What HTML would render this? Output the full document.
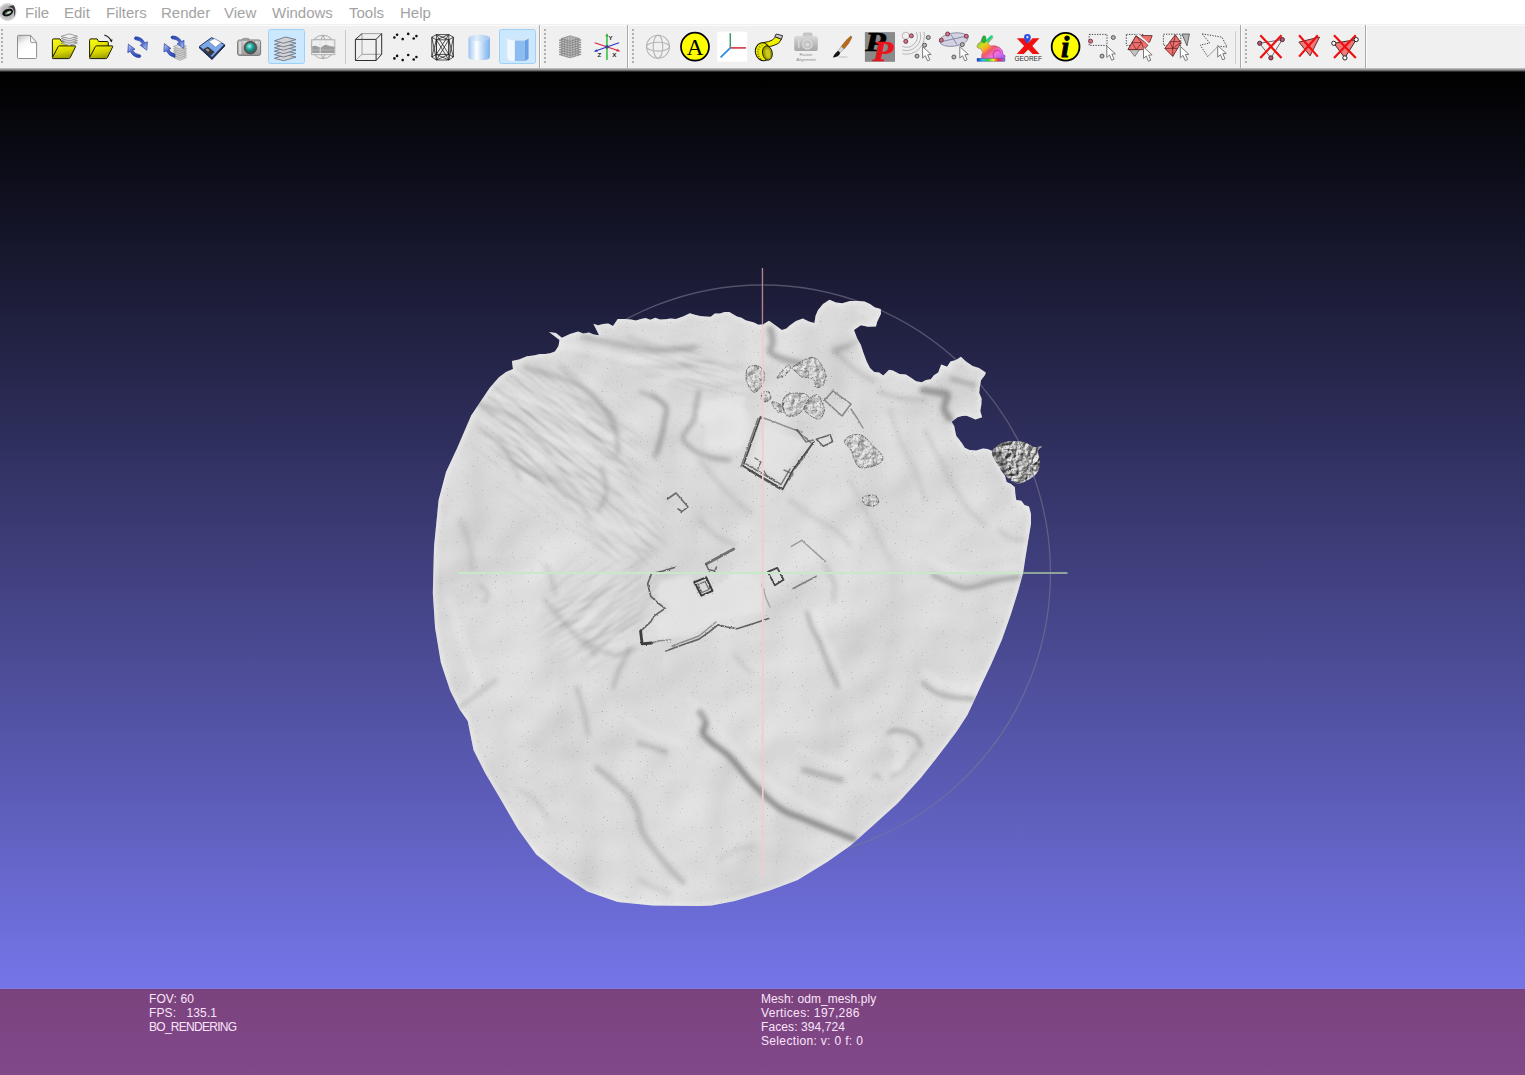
<!DOCTYPE html>
<html>
<head>
<meta charset="utf-8">
<title>MeshLab</title>
<style>
html,body{margin:0;padding:0;}
body{width:1525px;height:1075px;overflow:hidden;position:relative;background:#000;font-family:"Liberation Sans",sans-serif;}
#menubar{position:absolute;left:0;top:0;width:1525px;height:24px;background:#fff;border-bottom:1px solid #f0f0f0;}
#menubar span{position:absolute;top:4px;line-height:17px;font-size:15px;color:#a3a3a3;letter-spacing:0px;white-space:nowrap;}
#toolbar{position:absolute;left:0;top:25px;width:1525px;height:43px;background:#f0f0f0;}
#tbshadow{position:absolute;left:0;top:68px;width:1525px;height:4px;background:linear-gradient(#c6c6c6,#a6a6a6 30%,#747474 58%,#343434 84%,#0a0a0a);}
#viewport{position:absolute;left:0;top:72px;width:1525px;height:1003px;background:linear-gradient(#000000,#8080ff);}
#info{position:absolute;left:0;top:989px;width:1525px;height:86px;background:linear-gradient(#6f3f86 0,#7a437d 2px,#81488a 86px);}
#infotop{position:absolute;left:0;top:988px;width:1525px;height:1px;background:#8478da;}
#info div{position:absolute;font-size:12px;line-height:14px;color:#fbe4fb;white-space:pre;}
#scene{position:absolute;left:0;top:0;width:1525px;height:1075px;}
#icons{position:absolute;left:0;top:0;width:1525px;height:75px;}
</style>
</head>
<body>
<div id="viewport"></div>
<svg id="scene" width="1525" height="1075" viewBox="0 0 1525 1075">
<defs>
<clipPath id="meshclip"><path d="M473.5,750.0 L470.5,735.0 L467.7,721.0 L459.5,709.3 L450.2,690.7 L440.9,662.8 L435.1,627.9 L432.8,593.0 L434.0,546.5 L438.6,500.0 L446.0,472.0 L457.2,448.0 L471.2,415.6 L489.8,387.7 L499.0,377.2 L506.0,372.0 L513.0,369.0 L511.9,361.0 L519.0,359.5 L527.0,356.3 L533.6,355.5 L540.0,354.0 L545.1,354.0 L550.1,353.3 L554.9,351.6 L558.5,346.0 L559.5,340.0 L553.0,335.0 L549.0,331.9 L556.0,333.0 L561.9,337.7 L570.0,334.0 L578.1,331.4 L583.4,333.4 L589.0,332.5 L593.8,334.6 L599.0,335.3 L596.0,329.0 L593.3,323.7 L598.1,325.2 L603.0,324.0 L608.3,323.5 L613.0,326.0 L617.7,319.0 L624.4,319.1 L631.0,319.5 L636.0,320.4 L640.8,318.9 L645.6,317.9 L650.3,319.7 L655.3,317.7 L660.0,319.5 L665.3,319.2 L670.5,318.4 L675.8,319.0 L683.0,316.5 L689.8,313.3 L694.9,314.8 L700.0,316.0 L705.3,316.6 L710.7,316.7 L714.8,313.6 L720.0,313.5 L724.5,311.9 L729.3,312.0 L737.0,316.5 L741.6,317.7 L745.6,320.2 L754.0,322.5 L758.4,324.7 L763.3,324.2 L769.0,320.7 L775.0,325.0 L781.9,330.0 L786.4,328.4 L790.0,325.3 L796.0,321.0 L802.8,318.4 L809.0,321.5 L814.4,323.0 L815.5,316.0 L817.9,310.2 L823.0,304.0 L829.5,299.8 L836.0,302.5 L842.3,303.3 L850.0,301.0 L858.6,300.9 L864.6,301.4 L870.0,304.0 L874.9,307.4 L880.7,309.0 L881.0,313.7 L879.0,318.0 L877.1,322.1 L876.0,326.5 L868.0,326.8 L860.9,325.3 L854.0,330.0 L857.0,338.0 L860.9,345.1 L863.5,353.0 L866.7,361.4 L870.0,368.0 L874.2,371.9 L879.2,372.6 L883.2,375.6 L889.1,369.7 L892.8,370.4 L899.5,374.1 L905.9,374.5 L911.4,377.9 L916.1,381.2 L921.8,382.3 L926.0,379.9 L930.8,379.3 L933.9,375.3 L938.2,372.6 L941.2,364.5 L947.1,366.7 L950.5,361.4 L956.0,360.0 L960.9,356.7 L966.0,361.5 L972.6,366.0 L979.0,368.0 L985.8,372.6 L985.0,374.9 L981.0,380.2 L979.9,386.8 L979.2,392.8 L981.6,398.6 L981.4,404.6 L980.3,411.0 L982.1,417.3 L975.4,419.5 L971.0,417.5 L966.5,415.8 L962.0,416.0 L957.6,417.3 L951.6,421.8 L954.3,426.3 L955.3,431.4 L956.3,436.1 L959.2,439.6 L962.0,443.3 L964.8,447.8 L969.5,450.0 L976.3,450.5 L982.9,448.5 L987.5,449.0 L991.8,450.8 L994.4,455.4 L997.2,460.0 L999.5,464.8 L1000.7,470.1 L1004.9,475.4 L1006.7,482.0 L1011.1,484.1 L1014.9,487.2 L1015.3,493.6 L1016.3,499.9 L1021.3,500.7 L1024.5,504.9 L1029.0,506.6 L1031.0,514.0 L1031.0,523.8 L1028.1,541.3 L1025.2,558.9 L1023.2,572.6 L1018.4,590.2 L1010.5,615.5 L1001.8,640.0 L991.2,664.2 L983.7,680.0 L974.9,699.0 L967.4,714.9 L957.0,731.0 L946.5,745.1 L935.0,760.0 L920.9,777.7 L897.7,803.3 L874.4,824.2 L851.2,845.1 L827.9,861.4 L797.7,880.0 L769.8,890.5 L734.9,900.9 L711.6,905.6 L699.1,906.0 L652.6,905.6 L617.7,902.1 L587.4,891.6 L559.5,873.0 L536.3,854.4 L517.7,828.8 L500.2,798.6 L485.1,773.0 Z"/></clipPath>
<filter id="terrain" x="0" y="0" width="100%" height="100%" color-interpolation-filters="sRGB">
<feTurbulence type="fractalNoise" baseFrequency="0.009" numOctaves="3" seed="11" result="n"/>
<feDiffuseLighting in="n" surfaceScale="9" diffuseConstant="1.0" lighting-color="#ffffff" result="l"><feDistantLight azimuth="225" elevation="58"/></feDiffuseLighting>
<feColorMatrix in="l" type="matrix" values="0.34 0 0 0 0.568  0 0.34 0 0 0.568  0 0 0.34 0 0.568  0 0 0 0 1" result="base"/>
<feTurbulence type="fractalNoise" baseFrequency="0.8" numOctaves="2" seed="3" result="g"/>
<feColorMatrix in="g" type="matrix" values="0 0 0 0 0.3  0 0 0 0 0.3  0 0 0 0 0.3  -2.4 0 0 0 0.66" result="ga"/>
<feComposite in="ga" in2="base" operator="over"/>
</filter>
<filter id="b2" x="-20%" y="-20%" width="140%" height="140%"><feGaussianBlur stdDeviation="2"/></filter>
<filter id="b1" x="-20%" y="-20%" width="140%" height="140%"><feGaussianBlur stdDeviation="0.45"/></filter>
<filter id="speck" x="-10%" y="-10%" width="120%" height="120%" color-interpolation-filters="sRGB">
<feTurbulence type="fractalNoise" baseFrequency="0.6" numOctaves="2" seed="5" result="t"/>
<feColorMatrix in="t" type="matrix" values="0 0 0 0 0.2  0 0 0 0 0.2  0 0 0 0 0.2  -6 0 0 0 2.6" result="tt"/>
<feComposite in="tt" in2="SourceGraphic" operator="in"/>
</filter>
<filter id="crumple" x="-10%" y="-10%" width="120%" height="120%" color-interpolation-filters="sRGB">
<feTurbulence type="fractalNoise" baseFrequency="0.16" numOctaves="3" seed="9" result="t"/>
<feDiffuseLighting in="t" surfaceScale="3.2" diffuseConstant="1" lighting-color="#fff" result="l"><feDistantLight azimuth="225" elevation="50"/></feDiffuseLighting>
<feColorMatrix in="l" type="matrix" values="0.5 0 0 0 0.43  0 0.5 0 0 0.43  0 0 0.5 0 0.43  0 0 0 0 1" result="lc"/>
<feComposite in="lc" in2="SourceGraphic" operator="in"/>
</filter>
<filter id="crumple2" x="-10%" y="-10%" width="120%" height="120%" color-interpolation-filters="sRGB">
<feTurbulence type="fractalNoise" baseFrequency="0.2" numOctaves="3" seed="21" result="t"/>
<feDiffuseLighting in="t" surfaceScale="4.5" diffuseConstant="1" lighting-color="#fff" result="l"><feDistantLight azimuth="225" elevation="48"/></feDiffuseLighting>
<feColorMatrix in="l" type="matrix" values="0.75 0 0 0 0.18  0 0.75 0 0 0.18  0 0 0.75 0 0.18  0 0 0 0 1" result="lc"/>
<feComposite in="lc" in2="SourceGraphic" operator="in"/>
</filter>
<filter id="bumpy" x="-30%" y="-30%" width="160%" height="160%" color-interpolation-filters="sRGB">
<feTurbulence type="fractalNoise" baseFrequency="0.014 0.05" numOctaves="3" seed="17" result="t"/>
<feDiffuseLighting in="t" surfaceScale="5" diffuseConstant="1" lighting-color="#fff" result="l"><feDistantLight azimuth="225" elevation="56"/></feDiffuseLighting>
<feColorMatrix in="l" type="matrix" values="0.62 0 0 0 0.32  0 0.62 0 0 0.32  0 0 0.62 0 0.32  0 0 0 0 1" result="lc"/>
<feGaussianBlur in="SourceAlpha" stdDeviation="14" result="m"/>
<feComposite in="lc" in2="m" operator="in"/>
</filter>
<filter id="rough" x="-5%" y="-5%" width="110%" height="110%">
<feTurbulence type="fractalNoise" baseFrequency="0.35" numOctaves="2" seed="4" result="t"/>
<feDisplacementMap in="SourceGraphic" in2="t" scale="2.2" xChannelSelector="R" yChannelSelector="G" result="d"/>
<feGaussianBlur in="d" stdDeviation="0.35"/>
</filter>
</defs>
<circle cx="762.5" cy="573" r="288" fill="none" stroke="#7a7a90" stroke-opacity="0.58" stroke-width="1.3"/>
<g clip-path="url(#meshclip)">
<rect x="420" y="290" width="640" height="630" fill="#dcdcdc" filter="url(#terrain)"/>
<g filter="url(#bumpy)" opacity="0.6" transform="rotate(-30 595 615)"><ellipse cx="595" cy="615" rx="48" ry="42"/></g>
<g filter="url(#bumpy)" opacity="0.6" transform="rotate(38 560 440)"><ellipse cx="560" cy="440" rx="85" ry="60"/></g>
<g filter="url(#bumpy)" opacity="0.5" transform="rotate(40 620 520)"><ellipse cx="620" cy="520" rx="50" ry="30"/></g>
<g filter="url(#bumpy)" opacity="0.5" transform="rotate(15 690 370)"><ellipse cx="690" cy="370" rx="60" ry="22"/></g>
<g filter="url(#bumpy)" opacity="0.4" transform="rotate(-30 640 590)"><ellipse cx="640" cy="590" rx="30" ry="25"/></g>
<path d="M473.5,750.0 L470.5,735.0 L467.7,721.0 L459.5,709.3 L450.2,690.7 L440.9,662.8 L435.1,627.9 L432.8,593.0 L434.0,546.5 L438.6,500.0 L446.0,472.0 L457.2,448.0 L471.2,415.6 L489.8,387.7 L499.0,377.2 L506.0,372.0 L513.0,369.0 L511.9,361.0 L519.0,359.5 L527.0,356.3 L533.6,355.5 L540.0,354.0 L545.1,354.0 L550.1,353.3 L554.9,351.6 L558.5,346.0 L559.5,340.0 L553.0,335.0 L549.0,331.9 L556.0,333.0 L561.9,337.7 L570.0,334.0 L578.1,331.4 L583.4,333.4 L589.0,332.5 L593.8,334.6 L599.0,335.3 L596.0,329.0 L593.3,323.7 L598.1,325.2 L603.0,324.0 L608.3,323.5 L613.0,326.0 L617.7,319.0 L624.4,319.1 L631.0,319.5 L636.0,320.4 L640.8,318.9 L645.6,317.9 L650.3,319.7 L655.3,317.7 L660.0,319.5 L665.3,319.2 L670.5,318.4 L675.8,319.0 L683.0,316.5 L689.8,313.3 L694.9,314.8 L700.0,316.0 L705.3,316.6 L710.7,316.7 L714.8,313.6 L720.0,313.5 L724.5,311.9 L729.3,312.0 L737.0,316.5 L741.6,317.7 L745.6,320.2 L754.0,322.5 L758.4,324.7 L763.3,324.2 L769.0,320.7 L775.0,325.0 L781.9,330.0 L786.4,328.4 L790.0,325.3 L796.0,321.0 L802.8,318.4 L809.0,321.5 L814.4,323.0 L815.5,316.0 L817.9,310.2 L823.0,304.0 L829.5,299.8 L836.0,302.5 L842.3,303.3 L850.0,301.0 L858.6,300.9 L864.6,301.4 L870.0,304.0 L874.9,307.4 L880.7,309.0 L881.0,313.7 L879.0,318.0 L877.1,322.1 L876.0,326.5 L868.0,326.8 L860.9,325.3 L854.0,330.0 L857.0,338.0 L860.9,345.1 L863.5,353.0 L866.7,361.4 L870.0,368.0 L874.2,371.9 L879.2,372.6 L883.2,375.6 L889.1,369.7 L892.8,370.4 L899.5,374.1 L905.9,374.5 L911.4,377.9 L916.1,381.2 L921.8,382.3 L926.0,379.9 L930.8,379.3 L933.9,375.3 L938.2,372.6 L941.2,364.5 L947.1,366.7 L950.5,361.4 L956.0,360.0 L960.9,356.7 L966.0,361.5 L972.6,366.0 L979.0,368.0 L985.8,372.6 L985.0,374.9 L981.0,380.2 L979.9,386.8 L979.2,392.8 L981.6,398.6 L981.4,404.6 L980.3,411.0 L982.1,417.3 L975.4,419.5 L971.0,417.5 L966.5,415.8 L962.0,416.0 L957.6,417.3 L951.6,421.8 L954.3,426.3 L955.3,431.4 L956.3,436.1 L959.2,439.6 L962.0,443.3 L964.8,447.8 L969.5,450.0 L976.3,450.5 L982.9,448.5 L987.5,449.0 L991.8,450.8 L994.4,455.4 L997.2,460.0 L999.5,464.8 L1000.7,470.1 L1004.9,475.4 L1006.7,482.0 L1011.1,484.1 L1014.9,487.2 L1015.3,493.6 L1016.3,499.9 L1021.3,500.7 L1024.5,504.9 L1029.0,506.6 L1031.0,514.0 L1031.0,523.8 L1028.1,541.3 L1025.2,558.9 L1023.2,572.6 L1018.4,590.2 L1010.5,615.5 L1001.8,640.0 L991.2,664.2 L983.7,680.0 L974.9,699.0 L967.4,714.9 L957.0,731.0 L946.5,745.1 L935.0,760.0 L920.9,777.7 L897.7,803.3 L874.4,824.2 L851.2,845.1 L827.9,861.4 L797.7,880.0 L769.8,890.5 L734.9,900.9 L711.6,905.6 L699.1,906.0 L652.6,905.6 L617.7,902.1 L587.4,891.6 L559.5,873.0 L536.3,854.4 L517.7,828.8 L500.2,798.6 L485.1,773.0 Z" fill="none" stroke="#f6f6f6" stroke-width="7" opacity="0.4" filter="url(#b2)"/>
<g filter="url(#b2)" fill="none" stroke="#6e6e6e" stroke-linecap="round" stroke-linejoin="round">
<path d="M700.0,712.0 C701.0,713.7 705.5,718.5 706.0,722.0 C706.5,725.5 702.0,729.5 703.0,733.0 C704.0,736.5 707.5,739.0 712.0,743.0 C716.5,747.0 723.2,750.2 730.0,757.0 C736.8,763.8 744.5,775.3 753.0,784.0 C761.5,792.7 772.5,803.2 781.0,809.0 C789.5,814.8 795.7,815.5 804.0,819.0 C812.3,822.5 822.7,826.7 831.0,830.0 C839.3,833.3 850.2,837.5 854.0,839.0" stroke-width="6" opacity="0.7"/>
<path d="M804.0,770.0 C807.0,770.8 815.8,773.3 822.0,775.0 C828.2,776.7 837.8,779.2 841.0,780.0" stroke-width="6" opacity="0.38"/>
<path d="M639.0,743.0 C641.2,743.7 647.5,745.5 652.0,747.0 C656.5,748.5 663.7,751.2 666.0,752.0" stroke-width="5" opacity="0.3"/>
<path d="M923.0,683.0 C925.0,684.5 930.3,689.7 935.0,692.0 C939.7,694.3 944.5,695.8 951.0,697.0 C957.5,698.2 970.2,698.7 974.0,699.0" stroke-width="4" opacity="0.45"/>
<path d="M933.0,575.0 C935.5,576.2 943.0,579.9 948.0,582.0 C953.0,584.1 958.5,586.8 963.0,587.5 C967.5,588.2 969.5,587.7 975.0,586.5 C980.5,585.3 988.7,582.1 996.0,580.5 C1003.3,578.9 1015.2,577.6 1019.0,577.0" stroke-width="4.5" opacity="0.5"/>
<path d="M807.0,613.0 C807.8,615.5 810.0,623.3 812.0,628.0 C814.0,632.7 816.3,635.0 819.0,641.0 C821.7,647.0 824.8,656.3 828.0,664.0 C831.2,671.7 836.3,683.2 838.0,687.0" stroke-width="3" opacity="0.5"/>
<path d="M577.0,688.0 C578.2,692.0 582.2,704.3 584.0,712.0 C585.8,719.7 587.3,730.3 588.0,734.0" stroke-width="5" opacity="0.25"/>
<path d="M630.0,649.0 C628.3,652.2 622.8,661.5 620.0,668.0 C617.2,674.5 614.2,684.7 613.0,688.0" stroke-width="3" opacity="0.4"/>
<path d="M597.0,768.0 C599.5,770.0 606.7,775.3 612.0,780.0 C617.3,784.7 624.7,790.7 629.0,796.0 C633.3,801.3 636.0,806.5 638.0,812.0 C640.0,817.5 639.0,823.7 641.0,829.0 C643.0,834.3 646.8,839.3 650.0,844.0 C653.2,848.7 656.3,852.5 660.0,857.0 C663.7,861.5 668.2,866.8 672.0,871.0 C675.8,875.2 681.2,880.2 683.0,882.0" stroke-width="6" opacity="0.3"/>
<path d="M699.0,392.0 C698.5,394.3 696.8,401.3 696.0,406.0 C695.2,410.7 695.7,415.8 694.0,420.0 C692.3,424.2 687.8,427.8 686.0,431.0 C684.2,434.2 682.3,436.3 683.0,439.0 C683.7,441.7 687.3,444.7 690.0,447.0 C692.7,449.3 695.0,451.2 699.0,453.0 C703.0,454.8 709.0,456.8 714.0,458.0 C719.0,459.2 726.5,459.7 729.0,460.0" stroke-width="4.5" opacity="0.42"/>
<path d="M653.0,395.0 C654.5,396.3 659.8,400.3 662.0,403.0 C664.2,405.7 666.3,406.2 666.5,411.0 C666.7,415.8 664.6,425.0 663.0,432.0 C661.4,439.0 658.0,449.5 657.0,453.0" stroke-width="5" opacity="0.28"/>
<path d="M601.0,467.0 C601.7,469.3 604.2,476.3 605.0,481.0 C605.8,485.7 607.0,490.3 606.0,495.0 C605.0,499.7 600.2,506.7 599.0,509.0" stroke-width="4" opacity="0.3"/>
<path d="M560.0,367.0 C563.2,369.8 572.8,378.2 579.0,384.0 C585.2,389.8 592.3,396.8 597.0,402.0 C601.7,407.2 604.3,410.3 607.0,415.0 C609.7,419.7 612.0,427.5 613.0,430.0" stroke-width="5" opacity="0.2"/>
<path d="M478.0,404.0 C479.3,405.0 483.3,408.0 486.0,410.0 C488.7,412.0 492.7,415.0 494.0,416.0" stroke-width="4" opacity="0.25"/>
<path d="M629.0,337.0 C631.8,338.0 640.2,341.2 646.0,343.0 C651.8,344.8 658.2,347.2 664.0,348.0 C669.8,348.8 675.2,348.3 681.0,348.0 C686.8,347.7 696.0,346.3 699.0,346.0" stroke-width="5" opacity="0.15"/>
<path d="M923.0,390.0 C925.0,390.3 931.0,391.3 935.0,392.0 C939.0,392.7 945.2,392.5 947.0,394.0 C948.8,395.5 946.5,398.5 946.0,401.0 C945.5,403.5 943.3,406.0 944.0,409.0 C944.7,412.0 949.0,417.3 950.0,419.0" stroke-width="7" opacity="0.6"/>
<path d="M952.0,379.0 C953.8,379.5 959.3,381.0 963.0,382.0 C966.7,383.0 972.2,384.5 974.0,385.0" stroke-width="5" opacity="0.38"/>
<path d="M770.4,329.0 C770.8,331.3 772.9,339.2 772.8,343.0 C772.7,346.8 768.0,349.2 770.0,352.0 C772.0,354.8 779.4,357.7 784.6,359.6 C789.8,361.5 798.3,362.6 801.0,363.2" stroke-width="6" opacity="0.5"/>
<path d="M833.0,349.0 C834.2,348.8 837.5,347.9 840.0,347.5 C842.5,347.1 846.7,346.8 848.0,346.7" stroke-width="4" opacity="0.25"/>
<path d="M835.0,352.0 C837.2,351.0 844.2,348.0 848.0,346.0 C851.8,344.0 856.3,341.0 858.0,340.0" stroke-width="5" opacity="0.2"/>
<path d="M459.0,708.0 C460.8,706.7 466.5,702.7 470.0,700.0 C473.5,697.3 475.7,695.3 480.0,692.0 C484.3,688.7 493.3,682.0 496.0,680.0" stroke-width="3" opacity="0.3"/>
<path d="M545.0,565.0 C546.2,567.5 550.2,574.8 552.0,580.0 C553.8,585.2 555.3,593.3 556.0,596.0" stroke-width="4" opacity="0.18"/>
<path d="M480.0,585.0 C481.3,586.5 487.3,591.2 488.0,594.0 C488.7,596.8 484.7,600.7 484.0,602.0" stroke-width="4" opacity="0.22"/>
<path d="M735.0,655.0 C736.7,657.2 742.2,665.2 745.0,668.0 C747.8,670.8 750.8,671.3 752.0,672.0" stroke-width="4" opacity="0.15"/>
<path d="M1000.0,530.0 C1001.7,531.3 1006.0,536.3 1010.0,538.0 C1014.0,539.7 1021.7,539.7 1024.0,540.0" stroke-width="5" opacity="0.15"/>
<path d="M700.0,460.0 C702.7,463.3 710.2,473.3 716.0,480.0 C721.8,486.7 729.3,494.7 735.0,500.0 C740.7,505.3 747.5,510.0 750.0,512.0" stroke-width="5" opacity="0.15"/>
<path d="M790.0,500.0 C793.3,502.5 802.5,510.0 810.0,515.0 C817.5,520.0 828.3,525.0 835.0,530.0 C841.7,535.0 847.5,542.5 850.0,545.0" stroke-width="5" opacity="0.14"/>
<path d="M583.0,336.5 C588.7,337.8 605.3,341.7 617.0,344.0 C628.7,346.3 643.3,349.5 653.0,350.5 C662.7,351.5 668.2,350.4 675.0,350.0 C681.8,349.6 690.8,348.3 694.0,348.0" stroke-width="5" opacity="0.3"/>
<path d="M525.0,367.0 C529.7,368.5 543.3,372.5 553.0,376.0 C562.7,379.5 575.2,383.5 583.0,388.0 C590.8,392.5 595.0,397.7 600.0,403.0 C605.0,408.3 610.2,414.3 613.0,420.0 C615.8,425.7 616.2,431.5 617.0,437.0 C617.8,442.5 617.8,450.3 618.0,453.0" stroke-width="5" opacity="0.3"/>
<path d="M478.0,402.0 C481.3,403.3 491.3,407.0 498.0,410.0 C504.7,413.0 511.8,415.7 518.0,420.0 C524.2,424.3 529.7,430.5 535.0,436.0 C540.3,441.5 547.5,450.2 550.0,453.0" stroke-width="5" opacity="0.22"/>
<path d="M641.0,392.0 C643.3,393.0 650.8,395.7 655.0,398.0 C659.2,400.3 665.0,402.3 666.5,406.0 C668.0,409.7 664.8,415.3 664.0,420.0 C663.2,424.7 663.5,427.8 662.0,434.0 C660.5,440.2 656.2,453.2 655.0,457.0" stroke-width="4.5" opacity="0.3"/>
<path d="M500.0,440.0 C502.0,443.7 508.7,455.3 512.0,462.0 C515.3,468.7 518.7,477.0 520.0,480.0" stroke-width="5" opacity="0.16"/>
<path d="M560.0,470.0 C562.5,473.7 570.0,483.7 575.0,492.0 C580.0,500.3 587.5,515.3 590.0,520.0" stroke-width="5" opacity="0.16"/>
<path d="M460.0,520.0 C461.7,524.2 468.0,536.7 470.0,545.0 C472.0,553.3 471.7,565.8 472.0,570.0" stroke-width="5" opacity="0.14"/>
<path d="M545.0,600.0 C547.5,603.0 554.2,611.3 560.0,618.0 C565.8,624.7 574.0,633.8 580.0,640.0 C586.0,646.2 593.3,652.5 596.0,655.0" stroke-width="5" opacity="0.2"/>
<path d="M585.0,640.0 C587.5,641.7 594.5,647.5 600.0,650.0 C605.5,652.5 612.0,655.3 618.0,655.0 C624.0,654.7 633.0,649.2 636.0,648.0" stroke-width="4" opacity="0.25"/>
<path d="M836.0,352.0 C837.7,353.7 842.3,358.7 846.0,362.0 C849.7,365.3 853.7,369.0 858.0,372.0 C862.3,375.0 869.7,378.7 872.0,380.0" stroke-width="5" opacity="0.2"/>
<path d="M880.0,392.0 C883.3,393.0 892.5,396.7 900.0,398.0 C907.5,399.3 920.8,399.7 925.0,400.0" stroke-width="5" opacity="0.2"/>
<path d="M890.0,410.0 C891.7,415.0 895.8,430.0 900.0,440.0 C904.2,450.0 910.8,460.0 915.0,470.0 C919.2,480.0 923.3,495.0 925.0,500.0" stroke-width="4" opacity="0.14"/>
<path d="M925.0,430.0 C928.3,436.7 938.3,457.5 945.0,470.0 C951.7,482.5 958.3,495.8 965.0,505.0 C971.7,514.2 981.7,521.7 985.0,525.0" stroke-width="4" opacity="0.16"/>
<path d="M850.0,480.0 C853.3,486.7 863.3,506.7 870.0,520.0 C876.7,533.3 886.7,553.3 890.0,560.0" stroke-width="4" opacity="0.12"/>
<path d="M700.0,520.0 C702.5,522.5 709.2,530.8 715.0,535.0 C720.8,539.2 731.7,543.3 735.0,545.0" stroke-width="4" opacity="0.2"/>
<path d="M825.0,565.0 C826.7,568.3 833.7,579.2 835.0,585.0 C836.3,590.8 833.3,597.5 833.0,600.0" stroke-width="4" opacity="0.2"/>
<path d="M888.0,733.0 C888.8,732.6 891.3,730.9 893.0,730.5 C894.7,730.1 895.7,730.1 898.0,730.4 C900.3,730.6 904.1,731.1 907.0,732.0 C909.9,732.9 913.5,734.5 915.5,736.0 C917.5,737.5 918.1,739.1 919.0,741.0 C919.9,742.9 920.3,746.2 920.6,747.3" stroke-width="3" opacity="0.55"/>
<path d="M917.0,752.0 C916.1,753.1 913.7,755.6 911.4,758.6 C909.1,761.6 906.6,766.7 903.2,769.8 C899.8,772.9 893.0,775.8 891.0,777.0" stroke-width="2.5" opacity="0.3"/>
<path d="M873.5,778.0 C874.0,777.3 875.4,773.7 876.6,774.0 C877.8,774.3 880.0,779.0 880.7,780.0" stroke-width="2" opacity="0.4"/>
<path d="M640.0,880.0 C642.5,881.3 650.0,885.8 655.0,888.0 C660.0,890.2 667.5,892.2 670.0,893.0" stroke-width="5" opacity="0.15"/>
<path d="M720.0,860.0 C722.5,858.3 729.2,852.3 735.0,850.0 C740.8,847.7 751.7,846.7 755.0,846.0" stroke-width="5" opacity="0.12"/>
<path d="M520.0,790.0 C522.5,791.7 530.3,795.3 535.0,800.0 C539.7,804.7 545.8,815.0 548.0,818.0" stroke-width="5" opacity="0.14"/>
</g>
<g filter="url(#b2)" fill="none" stroke="#f4f4f4" stroke-linecap="round" stroke-linejoin="round">
<path d="M560.0,345.0 C566.7,346.2 586.7,349.5 600.0,352.0 C613.3,354.5 626.7,359.0 640.0,360.0 C653.3,361.0 673.3,358.3 680.0,358.0" stroke-width="8" opacity="0.35"/>
<path d="M500.0,395.0 C505.0,396.7 520.0,400.8 530.0,405.0 C540.0,409.2 550.0,413.3 560.0,420.0 C570.0,426.7 585.0,440.8 590.0,445.0" stroke-width="9" opacity="0.28"/>
<path d="M705.0,415.0 C708.3,414.2 718.8,409.2 725.0,410.0 C731.2,410.8 739.8,415.0 742.0,420.0 C744.2,425.0 742.5,435.8 738.0,440.0 C733.5,444.2 718.8,444.2 715.0,445.0" stroke-width="16" opacity="0.35"/>
<path d="M690.0,700.0 C695.0,705.0 710.0,719.2 720.0,730.0 C730.0,740.8 738.3,754.2 750.0,765.0 C761.7,775.8 776.7,786.7 790.0,795.0 C803.3,803.3 823.3,811.7 830.0,815.0" stroke-width="9" opacity="0.24"/>
<path d="M630.0,720.0 C634.2,722.5 646.7,731.3 655.0,735.0 C663.3,738.7 675.8,740.8 680.0,742.0" stroke-width="8" opacity="0.21"/>
<path d="M800.0,750.0 C804.2,751.7 816.7,757.0 825.0,760.0 C833.3,763.0 845.8,766.7 850.0,768.0" stroke-width="8" opacity="0.24"/>
<path d="M930.0,560.0 C935.0,562.0 950.0,570.3 960.0,572.0 C970.0,573.7 980.8,571.0 990.0,570.0 C999.2,569.0 1010.8,566.7 1015.0,566.0" stroke-width="7" opacity="0.28"/>
<path d="M925.0,672.0 C928.3,674.0 937.8,681.3 945.0,684.0 C952.2,686.7 964.2,687.3 968.0,688.0" stroke-width="7" opacity="0.24"/>
<path d="M815.0,610.0 C816.5,614.2 820.5,626.7 824.0,635.0 C827.5,643.3 832.3,651.7 836.0,660.0 C839.7,668.3 844.3,680.8 846.0,685.0" stroke-width="6" opacity="0.21"/>
<path d="M880.0,330.0 C883.3,332.5 892.5,340.8 900.0,345.0 C907.5,349.2 916.7,351.2 925.0,355.0 C933.3,358.8 945.8,365.8 950.0,368.0" stroke-width="8" opacity="0.21"/>
<path d="M450.0,600.0 C452.0,606.7 457.3,626.7 462.0,640.0 C466.7,653.3 475.3,673.3 478.0,680.0" stroke-width="10" opacity="0.21"/>
<path d="M860.0,310.0 C861.7,310.8 868.0,313.0 870.0,315.0 C872.0,317.0 871.7,320.8 872.0,322.0" stroke-width="8" opacity="0.21"/>
<path d="M896.0,742.0 C897.0,743.7 901.7,748.3 902.0,752.0 C902.3,755.7 898.7,762.0 898.0,764.0" stroke-width="14" opacity="0.28"/>
</g>
<g filter="url(#b2)" fill="#e6e6e6" opacity="0.7">
<path d="M764,425 L750,462 L781,480 L806,442 Z"/>
<path d="M660,580 L690,575 L700,600 L735,570 L760,580 L765,612 L720,620 L690,635 L660,640 L655,620 L672,607 L655,595 Z"/>
<path d="M705,400 L745,395 L740,450 L705,445 Z"/>
</g>
<g filter="url(#crumple)" opacity="0.92">
<path d="M748.0,368.0 C749.7,365.9 753.5,365.2 756.0,365.5 C758.5,365.8 761.7,367.6 763.0,370.0 C764.3,372.4 764.5,377.0 764.0,380.0 C763.5,383.0 761.7,385.9 760.0,388.0 C758.3,390.1 755.8,392.8 754.0,392.5 C752.2,392.2 750.3,388.4 749.0,386.0 C747.7,383.6 746.2,381.0 746.0,378.0 C745.8,375.0 746.3,370.1 748.0,368.0 Z" fill="#000"/>
<path d="M762.0,393.0 C763.0,391.8 766.5,391.2 768.0,392.0 C769.5,392.8 771.3,396.3 771.0,398.0 C770.7,399.7 767.5,401.8 766.0,402.0 C764.5,402.2 762.7,400.5 762.0,399.0 C761.3,397.5 761.0,394.2 762.0,393.0 Z" fill="#000"/>
<path d="M777.0,378.0 C776.7,377.2 781.0,372.2 783.0,370.0 C785.0,367.8 787.8,365.2 789.0,365.0 C790.2,364.8 790.7,367.3 790.0,369.0 C789.3,370.7 787.2,373.5 785.0,375.0 C782.8,376.5 777.3,378.8 777.0,378.0 Z" fill="#000"/>
<path d="M793.0,366.7 C795.8,364.4 807.2,357.5 812.0,357.3 C816.8,357.1 819.8,362.7 822.0,365.6 C824.2,368.5 825.2,371.4 825.4,374.6 C825.6,377.8 824.7,382.5 823.2,384.6 C821.7,386.7 818.2,388.3 816.5,387.4 C814.8,386.5 815.6,380.8 813.2,379.0 C810.8,377.2 805.0,378.1 802.0,376.8 C799.0,375.5 796.8,372.9 795.3,371.2 C793.8,369.5 790.2,369.0 793.0,366.7 Z" fill="#000"/>
<path d="M788.6,394.1 C792.0,393.0 799.8,392.9 803.1,393.5 C806.5,394.1 808.5,395.6 808.7,398.0 C808.9,400.4 806.1,405.3 804.2,408.1 C802.3,410.9 800.3,413.5 797.5,414.8 C794.7,416.1 789.9,417.0 787.5,415.9 C785.1,414.8 783.8,410.7 783.0,408.1 C782.2,405.5 782.1,402.5 783.0,400.2 C783.9,397.9 785.2,395.2 788.6,394.1 Z" fill="#000"/>
<path d="M808.7,399.1 C810.9,396.9 815.4,394.1 817.6,394.7 C819.8,395.3 821.0,399.7 822.1,402.5 C823.2,405.3 824.9,408.6 824.3,411.4 C823.7,414.2 821.5,418.8 818.7,419.2 C815.9,419.6 810.0,415.5 807.6,413.6 C805.2,411.8 804.0,410.5 804.2,408.1 C804.4,405.7 806.5,401.3 808.7,399.1 Z" fill="#000"/>
<path d="M844.4,441.6 C844.4,439.1 848.1,436.4 851.1,435.4 C854.1,434.4 858.8,433.8 862.3,435.4 C865.8,437.0 868.9,441.4 872.3,444.9 C875.6,448.3 881.1,453.1 882.4,456.1 C883.7,459.1 882.4,461.0 880.2,462.8 C878.0,464.6 872.7,466.6 869.0,467.2 C865.3,467.8 860.8,468.9 857.8,466.1 C854.8,463.3 853.3,454.6 851.1,450.5 C848.9,446.4 844.4,444.1 844.4,441.6 Z" fill="#000"/>
<path d="M862.5,499.0 C863.0,497.5 865.8,496.0 868.0,495.5 C870.2,495.0 874.2,494.8 876.0,496.0 C877.8,497.2 879.2,501.3 878.5,503.0 C877.8,504.7 874.2,505.8 872.0,506.0 C869.8,506.2 866.6,505.7 865.0,504.5 C863.4,503.3 862.0,500.5 862.5,499.0 Z" fill="#000"/>
<path d="M772.0,402.0 C772.8,401.2 779.0,403.3 781.0,405.0 C783.0,406.7 784.8,411.2 784.0,412.0 C783.2,412.8 778.0,411.7 776.0,410.0 C774.0,408.3 771.2,402.8 772.0,402.0 Z" fill="#000"/>
</g>
<g filter="url(#rough)">
<path d="M748.0,368.0 C749.7,365.9 753.5,365.2 756.0,365.5 C758.5,365.8 761.7,367.6 763.0,370.0 C764.3,372.4 764.5,377.0 764.0,380.0 C763.5,383.0 761.7,385.9 760.0,388.0 C758.3,390.1 755.8,392.8 754.0,392.5 C752.2,392.2 750.3,388.4 749.0,386.0 C747.7,383.6 746.2,381.0 746.0,378.0 C745.8,375.0 746.3,370.1 748.0,368.0 Z" fill="none" stroke="#4a4a4a" stroke-width="1" stroke-dasharray="3 1.2 1.5 0.8" stroke-opacity="0.7"/>
<path d="M762.0,393.0 C763.0,391.8 766.5,391.2 768.0,392.0 C769.5,392.8 771.3,396.3 771.0,398.0 C770.7,399.7 767.5,401.8 766.0,402.0 C764.5,402.2 762.7,400.5 762.0,399.0 C761.3,397.5 761.0,394.2 762.0,393.0 Z" fill="none" stroke="#4a4a4a" stroke-width="1" stroke-dasharray="3 1.2 1.5 0.8" stroke-opacity="0.7"/>
<path d="M777.0,378.0 C776.7,377.2 781.0,372.2 783.0,370.0 C785.0,367.8 787.8,365.2 789.0,365.0 C790.2,364.8 790.7,367.3 790.0,369.0 C789.3,370.7 787.2,373.5 785.0,375.0 C782.8,376.5 777.3,378.8 777.0,378.0 Z" fill="none" stroke="#4a4a4a" stroke-width="1" stroke-dasharray="3 1.2 1.5 0.8" stroke-opacity="0.7"/>
<path d="M793.0,366.7 C795.8,364.4 807.2,357.5 812.0,357.3 C816.8,357.1 819.8,362.7 822.0,365.6 C824.2,368.5 825.2,371.4 825.4,374.6 C825.6,377.8 824.7,382.5 823.2,384.6 C821.7,386.7 818.2,388.3 816.5,387.4 C814.8,386.5 815.6,380.8 813.2,379.0 C810.8,377.2 805.0,378.1 802.0,376.8 C799.0,375.5 796.8,372.9 795.3,371.2 C793.8,369.5 790.2,369.0 793.0,366.7 Z" fill="none" stroke="#4a4a4a" stroke-width="1" stroke-dasharray="3 1.2 1.5 0.8" stroke-opacity="0.7"/>
<path d="M788.6,394.1 C792.0,393.0 799.8,392.9 803.1,393.5 C806.5,394.1 808.5,395.6 808.7,398.0 C808.9,400.4 806.1,405.3 804.2,408.1 C802.3,410.9 800.3,413.5 797.5,414.8 C794.7,416.1 789.9,417.0 787.5,415.9 C785.1,414.8 783.8,410.7 783.0,408.1 C782.2,405.5 782.1,402.5 783.0,400.2 C783.9,397.9 785.2,395.2 788.6,394.1 Z" fill="none" stroke="#4a4a4a" stroke-width="1" stroke-dasharray="3 1.2 1.5 0.8" stroke-opacity="0.7"/>
<path d="M808.7,399.1 C810.9,396.9 815.4,394.1 817.6,394.7 C819.8,395.3 821.0,399.7 822.1,402.5 C823.2,405.3 824.9,408.6 824.3,411.4 C823.7,414.2 821.5,418.8 818.7,419.2 C815.9,419.6 810.0,415.5 807.6,413.6 C805.2,411.8 804.0,410.5 804.2,408.1 C804.4,405.7 806.5,401.3 808.7,399.1 Z" fill="none" stroke="#4a4a4a" stroke-width="1" stroke-dasharray="3 1.2 1.5 0.8" stroke-opacity="0.7"/>
<path d="M844.4,441.6 C844.4,439.1 848.1,436.4 851.1,435.4 C854.1,434.4 858.8,433.8 862.3,435.4 C865.8,437.0 868.9,441.4 872.3,444.9 C875.6,448.3 881.1,453.1 882.4,456.1 C883.7,459.1 882.4,461.0 880.2,462.8 C878.0,464.6 872.7,466.6 869.0,467.2 C865.3,467.8 860.8,468.9 857.8,466.1 C854.8,463.3 853.3,454.6 851.1,450.5 C848.9,446.4 844.4,444.1 844.4,441.6 Z" fill="none" stroke="#4a4a4a" stroke-width="1" stroke-dasharray="3 1.2 1.5 0.8" stroke-opacity="0.7"/>
<path d="M862.5,499.0 C863.0,497.5 865.8,496.0 868.0,495.5 C870.2,495.0 874.2,494.8 876.0,496.0 C877.8,497.2 879.2,501.3 878.5,503.0 C877.8,504.7 874.2,505.8 872.0,506.0 C869.8,506.2 866.6,505.7 865.0,504.5 C863.4,503.3 862.0,500.5 862.5,499.0 Z" fill="none" stroke="#4a4a4a" stroke-width="1" stroke-dasharray="3 1.2 1.5 0.8" stroke-opacity="0.7"/>
<path d="M772.0,402.0 C772.8,401.2 779.0,403.3 781.0,405.0 C783.0,406.7 784.8,411.2 784.0,412.0 C783.2,412.8 778.0,411.7 776.0,410.0 C774.0,408.3 771.2,402.8 772.0,402.0 Z" fill="none" stroke="#4a4a4a" stroke-width="1" stroke-dasharray="3 1.2 1.5 0.8" stroke-opacity="0.7"/>
</g>
<g filter="url(#speck)" opacity="0.3">
<path d="M748.0,368.0 C749.7,365.9 753.5,365.2 756.0,365.5 C758.5,365.8 761.7,367.6 763.0,370.0 C764.3,372.4 764.5,377.0 764.0,380.0 C763.5,383.0 761.7,385.9 760.0,388.0 C758.3,390.1 755.8,392.8 754.0,392.5 C752.2,392.2 750.3,388.4 749.0,386.0 C747.7,383.6 746.2,381.0 746.0,378.0 C745.8,375.0 746.3,370.1 748.0,368.0 Z" fill="#000"/>
<path d="M762.0,393.0 C763.0,391.8 766.5,391.2 768.0,392.0 C769.5,392.8 771.3,396.3 771.0,398.0 C770.7,399.7 767.5,401.8 766.0,402.0 C764.5,402.2 762.7,400.5 762.0,399.0 C761.3,397.5 761.0,394.2 762.0,393.0 Z" fill="#000"/>
<path d="M777.0,378.0 C776.7,377.2 781.0,372.2 783.0,370.0 C785.0,367.8 787.8,365.2 789.0,365.0 C790.2,364.8 790.7,367.3 790.0,369.0 C789.3,370.7 787.2,373.5 785.0,375.0 C782.8,376.5 777.3,378.8 777.0,378.0 Z" fill="#000"/>
<path d="M793.0,366.7 C795.8,364.4 807.2,357.5 812.0,357.3 C816.8,357.1 819.8,362.7 822.0,365.6 C824.2,368.5 825.2,371.4 825.4,374.6 C825.6,377.8 824.7,382.5 823.2,384.6 C821.7,386.7 818.2,388.3 816.5,387.4 C814.8,386.5 815.6,380.8 813.2,379.0 C810.8,377.2 805.0,378.1 802.0,376.8 C799.0,375.5 796.8,372.9 795.3,371.2 C793.8,369.5 790.2,369.0 793.0,366.7 Z" fill="#000"/>
<path d="M788.6,394.1 C792.0,393.0 799.8,392.9 803.1,393.5 C806.5,394.1 808.5,395.6 808.7,398.0 C808.9,400.4 806.1,405.3 804.2,408.1 C802.3,410.9 800.3,413.5 797.5,414.8 C794.7,416.1 789.9,417.0 787.5,415.9 C785.1,414.8 783.8,410.7 783.0,408.1 C782.2,405.5 782.1,402.5 783.0,400.2 C783.9,397.9 785.2,395.2 788.6,394.1 Z" fill="#000"/>
<path d="M808.7,399.1 C810.9,396.9 815.4,394.1 817.6,394.7 C819.8,395.3 821.0,399.7 822.1,402.5 C823.2,405.3 824.9,408.6 824.3,411.4 C823.7,414.2 821.5,418.8 818.7,419.2 C815.9,419.6 810.0,415.5 807.6,413.6 C805.2,411.8 804.0,410.5 804.2,408.1 C804.4,405.7 806.5,401.3 808.7,399.1 Z" fill="#000"/>
<path d="M844.4,441.6 C844.4,439.1 848.1,436.4 851.1,435.4 C854.1,434.4 858.8,433.8 862.3,435.4 C865.8,437.0 868.9,441.4 872.3,444.9 C875.6,448.3 881.1,453.1 882.4,456.1 C883.7,459.1 882.4,461.0 880.2,462.8 C878.0,464.6 872.7,466.6 869.0,467.2 C865.3,467.8 860.8,468.9 857.8,466.1 C854.8,463.3 853.3,454.6 851.1,450.5 C848.9,446.4 844.4,444.1 844.4,441.6 Z" fill="#000"/>
<path d="M862.5,499.0 C863.0,497.5 865.8,496.0 868.0,495.5 C870.2,495.0 874.2,494.8 876.0,496.0 C877.8,497.2 879.2,501.3 878.5,503.0 C877.8,504.7 874.2,505.8 872.0,506.0 C869.8,506.2 866.6,505.7 865.0,504.5 C863.4,503.3 862.0,500.5 862.5,499.0 Z" fill="#000"/>
<path d="M772.0,402.0 C772.8,401.2 779.0,403.3 781.0,405.0 C783.0,406.7 784.8,411.2 784.0,412.0 C783.2,412.8 778.0,411.7 776.0,410.0 C774.0,408.3 771.2,402.8 772.0,402.0 Z" fill="#000"/>
</g>
<g filter="url(#rough)" fill="none" stroke-linecap="round" stroke-linejoin="round">
<path d="M760.5,417.0 L743.0,466.0 L782.6,489.3 L793.0,470.0 L814.0,441.6" stroke="#4a4a4a" stroke-width="1.75" opacity="1.00"/>
<path d="M746.0,464.0 L781.0,484.5 L790.0,469.0" stroke="#5a5a5a" stroke-width="1.45" opacity="0.80"/>
<path d="M755.0,458.0 L761.0,462.0 L758.0,468.0" stroke="#555" stroke-width="1.45" opacity="0.80"/>
<path d="M784.0,470.0 L793.0,474.0 L789.0,480.0" stroke="#555" stroke-width="1.45" opacity="0.70"/>
<path d="M760.5,417.0 L772.0,421.0 L790.0,428.0 L802.0,432.0" stroke="#666" stroke-width="1.45" opacity="0.65"/>
<path d="M816.3,439.3 L830.2,434.7 L832.6,441.6 L823.3,446.3 Z" stroke="#555" stroke-width="1.55" opacity="0.90"/>
<path d="M797.0,430.0 L806.0,442.0 L813.0,440.0" stroke="#555" stroke-width="1.45" opacity="0.70"/>
<path d="M758.0,418.5 L741.0,466.5" stroke="#555" stroke-width="1.45" opacity="0.75"/>
<path d="M748.0,470.0 L780.5,489.5" stroke="#444" stroke-width="1.45" opacity="0.80"/>
<path d="M764.0,471.0 L767.0,476.0 L775.0,480.5" stroke="#555" stroke-width="1.45" opacity="0.75"/>
<path d="M795.9,429.8 L803.0,436.0 L810.9,442.7" stroke="#555" stroke-width="1.45" opacity="0.70"/>
<path d="M812.0,443.8 L804.0,457.0 L795.3,468.4" stroke="#555" stroke-width="1.45" opacity="0.70"/>
<path d="M824.4,400.0 L833.0,391.0 L851.0,404.0 L842.0,416.0 Z" stroke="#666" stroke-width="1.45" opacity="0.75"/>
<path d="M851.0,409.0 L857.0,418.0 L863.0,428.0" stroke="#666" stroke-width="1.45" opacity="0.65"/>
<path d="M667.5,499.0 L676.0,493.0 L688.0,507.0 L682.0,511.5 L678.0,509.0" stroke="#555" stroke-width="1.55" opacity="0.85"/>
<path d="M675.3,567.2 L663.0,571.0 L651.6,573.5 L647.7,583.8 L650.8,596.4 L658.7,603.5 L665.0,608.3 L654.0,616.2 L650.8,621.7 L640.6,631.2" stroke="#555" stroke-width="1.65" opacity="0.90"/>
<path d="M640.6,631.2 L642.1,643.8 L651.6,643.0" stroke="#3c3c3c" stroke-width="2.85" opacity="1.00"/>
<path d="M651.6,643.0 L659.5,640.7 L670.6,639.9" stroke="#666" stroke-width="1.45" opacity="0.70"/>
<path d="M665.8,651.0 L682.0,645.0 L699.0,639.1 L709.0,632.0 L718.0,624.9 L727.0,627.0 L737.0,628.8 L754.4,623.3 L768.6,618.5" stroke="#555" stroke-width="1.65" opacity="0.90"/>
<path d="M672.0,646.0 L699.0,636.0 L716.0,622.0" stroke="#666" stroke-width="1.35" opacity="0.65"/>
<path d="M706.2,564.0 L733.8,549.0" stroke="#555" stroke-width="2.65" opacity="0.80"/>
<path d="M706.0,564.0 L708.5,569.5 L714.9,571.1 L716.4,567.2" stroke="#555" stroke-width="1.65" opacity="0.85"/>
<path d="M694.3,582.2 L706.2,577.4 L712.5,590.9 L701.4,595.6 Z" stroke="#3c3c3c" stroke-width="2.05" opacity="1.00"/>
<path d="M698.0,584.5 L705.0,581.5 L709.0,589.5 L702.0,592.5 Z" stroke="#555" stroke-width="1.25" opacity="0.80"/>
<path d="M767.8,571.9 L777.3,567.9 L783.6,579.8 L774.9,585.3 Z" stroke="#444" stroke-width="1.75" opacity="1.00"/>
<path d="M793.1,588.5 L816.0,576.6" stroke="#666" stroke-width="1.65" opacity="0.75"/>
<path d="M790.8,546.6 L801.8,540.3 L825.5,561.6" stroke="#777" stroke-width="1.45" opacity="0.65"/>
<path d="M762.0,585.0 L766.0,598.0 L770.0,607.0" stroke="#777" stroke-width="1.45" opacity="0.50"/>
</g>
</g>
<clipPath id="rockclip"><path d="M992.0,452.0 C992.7,449.0 996.7,445.8 1000.0,444.0 C1003.3,442.2 1008.0,441.3 1012.0,441.0 C1016.0,440.7 1020.3,441.0 1024.0,442.0 C1027.7,443.0 1031.0,446.2 1034.0,447.0 C1037.0,447.8 1041.3,445.8 1042.0,446.5 C1042.7,447.2 1038.3,448.4 1038.0,451.0 C1037.7,453.6 1040.2,458.3 1040.0,462.0 C1039.8,465.7 1039.0,470.0 1037.0,473.0 C1035.0,476.0 1031.2,478.2 1028.0,480.0 C1024.8,481.8 1021.3,483.8 1018.0,483.5 C1014.7,483.2 1010.7,480.2 1008.0,478.0 C1005.3,475.8 1004.0,472.7 1002.0,470.0 C1000.0,467.3 997.7,465.0 996.0,462.0 C994.3,459.0 991.3,455.0 992.0,452.0 Z"/></clipPath>
<g>
<g filter="url(#crumple2)"><path d="M992.0,452.0 C992.7,449.0 996.7,445.8 1000.0,444.0 C1003.3,442.2 1008.0,441.3 1012.0,441.0 C1016.0,440.7 1020.3,441.0 1024.0,442.0 C1027.7,443.0 1031.0,446.2 1034.0,447.0 C1037.0,447.8 1041.3,445.8 1042.0,446.5 C1042.7,447.2 1038.3,448.4 1038.0,451.0 C1037.7,453.6 1040.2,458.3 1040.0,462.0 C1039.8,465.7 1039.0,470.0 1037.0,473.0 C1035.0,476.0 1031.2,478.2 1028.0,480.0 C1024.8,481.8 1021.3,483.8 1018.0,483.5 C1014.7,483.2 1010.7,480.2 1008.0,478.0 C1005.3,475.8 1004.0,472.7 1002.0,470.0 C1000.0,467.3 997.7,465.0 996.0,462.0 C994.3,459.0 991.3,455.0 992.0,452.0 Z" fill="#000"/></g>
<g clip-path="url(#rockclip)"><g filter="url(#b2)"><path d="M995,451 L1001,462 L1006,474" stroke="#505050" stroke-width="6" fill="none" opacity="0.6"/><path d="M1020,455 L1028,470 L1020,480" stroke="#8a8a8a" stroke-width="5" fill="none" opacity="0.5"/><path d="M1012,446 L1030,450" stroke="#e8e8e8" stroke-width="5" fill="none" opacity="0.45"/></g></g>
<g filter="url(#speck)" opacity="0.45"><path d="M992.0,452.0 C992.7,449.0 996.7,445.8 1000.0,444.0 C1003.3,442.2 1008.0,441.3 1012.0,441.0 C1016.0,440.7 1020.3,441.0 1024.0,442.0 C1027.7,443.0 1031.0,446.2 1034.0,447.0 C1037.0,447.8 1041.3,445.8 1042.0,446.5 C1042.7,447.2 1038.3,448.4 1038.0,451.0 C1037.7,453.6 1040.2,458.3 1040.0,462.0 C1039.8,465.7 1039.0,470.0 1037.0,473.0 C1035.0,476.0 1031.2,478.2 1028.0,480.0 C1024.8,481.8 1021.3,483.8 1018.0,483.5 C1014.7,483.2 1010.7,480.2 1008.0,478.0 C1005.3,475.8 1004.0,472.7 1002.0,470.0 C1000.0,467.3 997.7,465.0 996.0,462.0 C994.3,459.0 991.3,455.0 992.0,452.0 Z" fill="#000"/></g>
<circle cx="762.5" cy="573" r="288" fill="none" stroke="#8c8c8c" stroke-width="1.2" clip-path="url(#rockclip)"/>
</g>
<line x1="762.4" y1="268" x2="762.4" y2="324.5" stroke="#a29eb0" stroke-width="1.2"/>
<line x1="763.3" y1="269" x2="763.3" y2="324.5" stroke="#7a2436" stroke-width="0.7"/>
<line x1="762.8" y1="324.5" x2="762.8" y2="878" stroke="#f2cbcc" stroke-width="1.6"/>
<line x1="458" y1="573" x2="1023" y2="573" stroke="#c6e9c7" stroke-width="2"/>
<line x1="1023" y1="573" x2="1067.5" y2="573" stroke="#8da39b" stroke-width="2"/>
</svg>
<div id="infotop"></div>
<div id="info">
<div style="left:149px;top:3px"><span style="letter-spacing:0.1px">FOV: 60</span>
<span style="letter-spacing:0.12px">FPS:   135.1</span>
<span style="letter-spacing:-0.72px">BO_RENDERING</span></div>
<div style="left:761px;top:3px"><span style="letter-spacing:0.07px">Mesh: odm_mesh.ply</span>
<span style="letter-spacing:0.35px">Vertices: 197,286</span>
<span style="letter-spacing:0.1px">Faces: 394,724</span>
<span style="letter-spacing:0.34px">Selection: v: 0 f: 0</span></div>
</div>
<div id="menubar">
<span style="left:25px">File</span>
<span style="left:64px">Edit</span>
<span style="left:106px">Filters</span>
<span style="left:161px">Render</span>
<span style="left:224px">View</span>
<span style="left:272px">Windows</span>
<span style="left:349px">Tools</span>
<span style="left:400px">Help</span>
</div>
<div id="toolbar"></div>
<div id="tbshadow"></div>
<svg id="icons" width="1525" height="75" viewBox="0 0 1525 75">
<defs>
<linearGradient id="gFold" x1="0" y1="0" x2="0.6" y2="1"><stop offset="0" stop-color="#ffff20"/><stop offset="0.55" stop-color="#e0e000"/><stop offset="1" stop-color="#8c8c00"/></linearGradient>
<linearGradient id="gFold2" x1="0" y1="0" x2="0.3" y2="1"><stop offset="0" stop-color="#f4f400"/><stop offset="0.6" stop-color="#d0d000"/><stop offset="1" stop-color="#a0a000"/></linearGradient>
<linearGradient id="gDoc" x1="0.2" y1="0" x2="0.5" y2="0.6"><stop offset="0" stop-color="#c8c8c8"/><stop offset="0.5" stop-color="#f6f6f6"/><stop offset="1" stop-color="#ffffff"/></linearGradient>
<linearGradient id="gBlueA" x1="0" y1="0" x2="1" y2="1"><stop offset="0" stop-color="#2040b0"/><stop offset="0.55" stop-color="#4868d0"/><stop offset="1" stop-color="#c8d8f8"/></linearGradient>
<linearGradient id="gBlueB" x1="1" y1="1" x2="0" y2="0"><stop offset="0" stop-color="#2040b0"/><stop offset="0.55" stop-color="#4868d0"/><stop offset="1" stop-color="#c8d8f8"/></linearGradient>
<linearGradient id="gCyl" x1="0" y1="0" x2="1" y2="0"><stop offset="0" stop-color="#9cc4f0"/><stop offset="0.38" stop-color="#ffffff"/><stop offset="0.75" stop-color="#a8ccf4"/><stop offset="1" stop-color="#7eb0ea"/></linearGradient>
<linearGradient id="gCam" x1="0" y1="0" x2="0" y2="1"><stop offset="0" stop-color="#d8d8d8"/><stop offset="0.5" stop-color="#b4b4b4"/><stop offset="1" stop-color="#9a9a9a"/></linearGradient>
<radialGradient id="gLens" cx="0.4" cy="0.35" r="0.7"><stop offset="0" stop-color="#a0f0e8"/><stop offset="0.5" stop-color="#20a8a0"/><stop offset="1" stop-color="#086860"/></radialGradient>
<linearGradient id="gRain" x1="0" y1="0" x2="1" y2="0"><stop offset="0" stop-color="#2030d0"/><stop offset="0.2" stop-color="#20c0e0"/><stop offset="0.4" stop-color="#30d030"/><stop offset="0.58" stop-color="#f0f020"/><stop offset="0.75" stop-color="#f03020"/><stop offset="0.9" stop-color="#d030d0"/><stop offset="1" stop-color="#20c0a0"/></linearGradient>
<linearGradient id="gBun" x1="0" y1="0.1" x2="0.9" y2="1"><stop offset="0" stop-color="#20c040"/><stop offset="0.28" stop-color="#c8e020"/><stop offset="0.42" stop-color="#f8b020"/><stop offset="0.56" stop-color="#f05868"/><stop offset="0.76" stop-color="#f070e0"/><stop offset="1" stop-color="#a860f0"/></linearGradient>
<g id="hdl" fill="#b0b0b0"><rect x="0" y="0" width="2" height="2"/><rect x="0" y="4" width="2" height="2"/><rect x="0" y="8" width="2" height="2"/><rect x="0" y="12" width="2" height="2"/><rect x="0" y="16" width="2" height="2"/><rect x="0" y="20" width="2" height="2"/><rect x="0" y="24" width="2" height="2"/><rect x="0" y="28" width="2" height="2"/><rect x="0" y="32" width="2" height="2"/></g>
<g id="cur"><path d="M0,0 L0,11.5 L2.7,9 L4.9,14.2 L7.3,13.2 L5.1,8.1 L8.6,7.9 Z" fill="#ffffff" stroke="#7a7a7a" stroke-width="1" stroke-linejoin="round"/></g>
<g id="gdot"><circle r="2" fill="#b4b4b4" stroke="#4e4e4e" stroke-width="0.9"/></g>
<g id="rdot"><circle r="2" fill="#d87488" stroke="#6a3040" stroke-width="0.9"/></g>
</defs>
<!-- logo -->
<g>
<defs>
<radialGradient id="gFace" cx="0.5" cy="0.5" r="0.5"><stop offset="0" stop-color="#a6a4a6"/><stop offset="0.6" stop-color="#b8b6b8"/><stop offset="0.86" stop-color="#d6d4d6"/><stop offset="1" stop-color="#ffffff" stop-opacity="0"/></radialGradient>
<filter id="fb" x="-30%" y="-30%" width="160%" height="160%"><feGaussianBlur stdDeviation="0.55"/></filter>
<radialGradient id="gIris" cx="0.6" cy="0.5" r="0.6"><stop offset="0" stop-color="#f6fff6"/><stop offset="0.45" stop-color="#a8c0a8"/><stop offset="1" stop-color="#2c3c2c"/></radialGradient>
</defs>
<circle cx="7.6" cy="12" r="9.8" fill="url(#gFace)"/>
<g filter="url(#fb)">
<path d="M7.6,7.4 Q11,5 13.8,5.2 Q16.6,10 14.2,17.2 Q14.6,11 12.6,8.2 Q10,6.6 7.6,7.4 Z" fill="#1a161a" opacity="0.8"/>
<ellipse cx="7.7" cy="12.5" rx="5.6" ry="3.5" transform="rotate(-22 7.7 12.5)" fill="#0c0c0c"/>
<ellipse cx="8" cy="12.7" rx="3.7" ry="1.7" transform="rotate(-24 8 12.7)" fill="url(#gIris)"/>
<path d="M5.4,13.2 Q7.4,11.6 9.4,11.4" stroke="#2a3a2a" stroke-width="0.5" fill="none"/>
</g>
</g>
<!-- toolbar top highlight -->
<rect x="0" y="25" width="1525" height="1" fill="#fbfbfb"/>
<!-- handles -->
<use href="#hdl" x="1" y="29"/><use href="#hdl" x="544" y="29"/><use href="#hdl" x="632" y="29"/><use href="#hdl" x="1245" y="29"/>
<!-- separators -->
<rect x="345" y="30" width="1" height="34" fill="#c9c9c9"/>
<rect x="539" y="25" width="1" height="43" fill="#a9a9a9"/><rect x="540" y="25" width="1" height="43" fill="#fdfdfd"/>
<rect x="627" y="25" width="1" height="43" fill="#a9a9a9"/><rect x="628" y="25" width="1" height="43" fill="#fdfdfd"/>
<rect x="1235" y="31" width="1" height="33" fill="#cdcdcd"/>
<rect x="1240" y="25" width="1" height="43" fill="#a9a9a9"/><rect x="1241" y="25" width="1" height="43" fill="#fdfdfd"/>
<rect x="1365" y="25" width="1" height="43" fill="#a9a9a9"/><rect x="1366" y="25" width="1" height="43" fill="#fdfdfd"/>
<!-- checked highlights -->
<rect x="268.5" y="29.5" width="36" height="34" rx="2" fill="#cce8ff" stroke="#9fd0f8" stroke-width="1"/>
<rect x="499.5" y="29.5" width="36" height="34" rx="2" fill="#cce8ff" stroke="#9fd0f8" stroke-width="1"/>

<!-- 1 new document -->
<path d="M17.5,36.5 q0,-1.2 1.2,-1.2 H30.5 L36.6,42.6 V57.4 q0,1.1 -1.1,1.1 H18.6 q-1.1,0 -1.1,-1.1 Z" fill="url(#gDoc)" stroke="#8e8e8e" stroke-width="1"/>
<path d="M30.5,35.3 V41 q0,1.6 1.6,1.6 H36.6 Z" fill="#f4f4f4" stroke="#8e8e8e" stroke-width="0.9" stroke-linejoin="round"/>

<!-- 2 folder + layers -->
<g>
<path d="M52.4,57 V40.2 q0,-1.3 1.3,-1.3 h6.2 l1.6,2.6 h8.6 q1,0 1,1 V46" fill="url(#gFold)" stroke="#1a1a00" stroke-width="1"/>
<path d="M52.4,57.6 L58.2,46.6 q0.4,-0.7 1.2,-0.7 H75 q0.9,0 0.5,0.9 L70.2,57.6 q-0.5,1 -1.6,1 H53.2 q-1.2,0 -0.8,-1 Z" fill="url(#gFold2)" stroke="#1a1a00" stroke-width="1" stroke-linejoin="round"/>
<g stroke="#8c8c8c" stroke-width="0.8" fill="#dcdcdc">
<path d="M61,43.2 L69,40.6 L77.5,43 L69.5,45.4 Z"/>
<path d="M61,40.9 L69,38.3 L77.5,40.7 L69.5,43.1 Z"/>
<path d="M61,38.6 L69,36 L77.5,38.4 L69.5,40.8 Z" fill="#e8e8e8"/>
<path d="M61,36.4 L69,33.9 L77.5,36.2 L69.5,38.6 Z" fill="#f2f2f2"/>
</g>
</g>

<!-- 3 folder + arrow -->
<g>
<path d="M89.6,57 V40.2 q0,-1.3 1.3,-1.3 h6.2 l1.6,2.6 h8.6 q1,0 1,1 V46" fill="url(#gFold)" stroke="#1a1a00" stroke-width="1"/>
<path d="M89.6,57.6 L95.4,46.6 q0.4,-0.7 1.2,-0.7 H112.2 q0.9,0 0.5,0.9 L107.4,57.6 q-0.5,1 -1.6,1 H90.4 q-1.2,0 -0.8,-1 Z" fill="url(#gFold2)" stroke="#1a1a00" stroke-width="1" stroke-linejoin="round"/>
<path d="M104.3,35 q5.2,1.6 7,6.2" fill="none" stroke="#222" stroke-width="1.1"/>
<path d="M109.6,40.2 L111.9,42.6 L112.5,39.2 Z" fill="#222"/>
</g>

<!-- 4 reload -->
<g id="reload">
<path d="M135.6,36.8 q6.5,0.2 9.2,6.2 l2.6,-1.2 l-0.6,8.4 l-6.6,-5 l2.4,-1.1 q-2.2,-4.2 -7.6,-4.6 q-1.6,-1.7 0.6,-2.7 Z" fill="url(#gBlueA)" stroke="#2a3c9c" stroke-width="0.7" stroke-linejoin="round"/>
<path d="M139.6,57.6 q-6.5,-0.2 -9.2,-6.2 l-2.6,1.2 l0.6,-8.4 l6.6,5 l-2.4,1.1 q2.2,4.2 7.6,4.6 q1.6,1.7 -0.6,2.7 Z" fill="url(#gBlueB)" stroke="#2a3c9c" stroke-width="0.7" stroke-linejoin="round"/>
</g>
<!-- 5 reload all -->
<g>
<g stroke="#9a9a9a" stroke-width="0.7" fill="#cfcfcf">
<path d="M173.5,57.5 L180,55 L186.5,57.3 L180,60.3 Z"/>
<path d="M173.5,55.3 L180,52.8 L186.5,55.1 L180,58.1 Z"/>
<path d="M173.5,53.1 L180,50.6 L186.5,52.9 L180,55.9 Z"/>
<path d="M173.5,50.9 L180,48.4 L186.5,50.7 L180,53.7 Z"/>
<path d="M173.5,48.7 L180,46.2 L186.5,48.5 L180,51.5 Z"/>
<path d="M173.5,46.5 L180,44 L186.5,46.3 L180,49.3 Z" fill="#dddddd"/>
</g>
<path d="M172,36 q6.8,0 9.6,5.6 l2.4,-1.2 l-0.3,8 l-6.6,-4.6 l2.3,-1.1 q-2.3,-3.8 -7.6,-4 q-1.7,-1.7 0.2,-2.7 Z" fill="url(#gBlueA)" stroke="#2a3c9c" stroke-width="0.7" stroke-linejoin="round"/>
<path d="M175,57.2 q-6,-0.8 -8.6,-6.4 l-2.5,1.1 l0.5,-8.3 l6.5,4.9 l-2.3,1.1 q2.1,3.6 6.4,4.6 Z" fill="url(#gBlueB)" stroke="#2a3c9c" stroke-width="0.7" stroke-linejoin="round"/>
</g>

<!-- 6 save floppy -->
<g stroke-linejoin="round">
<path d="M199,47.6 L211.6,38.2 L225,45.8 L212,59.6 Z" fill="#1c2c58" stroke="#101a3a" stroke-width="0.8"/>
<path d="M199.4,46.4 L211.6,37.6 L224.6,44.6 L212,57.6 Z" fill="#7aa8e8" stroke="#1c2c58" stroke-width="0.9"/>
<path d="M208.6,41.6 L214.4,38.6 L221.6,42.4 L215.6,47.2 Z" fill="#ffffff" stroke="#4a5a8a" stroke-width="0.5"/>
<path d="M203.6,49.4 L207.8,47 L214.2,52 L210.8,55.6 Z" fill="#3a3a3a" stroke="#1a1a2a" stroke-width="0.5"/>
<path d="M205.4,49.6 L207.4,48.5 L209.8,50.4 L208,51.8 Z" fill="#9a9a9a"/>
</g>

<!-- 7 camera -->
<g>
<rect x="242.5" y="38.4" width="6.5" height="3" rx="0.8" fill="#c4c4c4" stroke="#7a7a7a" stroke-width="0.7"/>
<rect x="237.6" y="40" width="23" height="15.4" rx="1.8" fill="url(#gCam)" stroke="#6e6e6e" stroke-width="0.9"/>
<rect x="238.4" y="41" width="3.4" height="13.4" rx="1" fill="#d8d8d8" stroke="#8a8a8a" stroke-width="0.5"/>
<rect x="254.5" y="41.4" width="4.2" height="2.2" fill="#e8e8e8" stroke="#7a7a7a" stroke-width="0.4"/>
<circle cx="250.4" cy="47.6" r="6.3" fill="#5a5a5a" stroke="#3a3a3a" stroke-width="0.7"/>
<circle cx="250.4" cy="47.6" r="4.6" fill="url(#gLens)"/>
</g>

<!-- 8 layers (checked) -->
<g stroke="#66768a" stroke-width="0.9" fill="#d3d1d1" stroke-linejoin="round">
<path d="M274.4,58.3 L285.6,54.5 L296,57.1 L283.6,60.7 Z"/>
<path d="M274.4,54.6 L285.6,50.8 L296,53.4 L283.6,57.0 Z"/>
<path d="M274.4,51.2 L285.6,47.4 L296,50.0 L283.6,53.6 Z"/>
<path d="M274.4,47.8 L285.6,44.0 L296,46.6 L283.6,50.2 Z"/>
<path d="M274.4,44.4 L285.6,40.6 L296,43.2 L283.6,46.8 Z"/>
<path d="M274.4,40.8 L285.6,37.0 L296,39.6 L283.6,43.2 Z"/>
</g>

<!-- 9 globe raster (disabled look) -->
<g fill="none" stroke="#ababab" stroke-width="1">
<circle cx="323" cy="46.9" r="11.7"/>
<path d="M323,35.2 Q316,46.9 323,58.6 M323,35.2 Q330,46.9 323,58.6 M314,39.4 H332 M314,54.6 H332" />
<rect x="311.6" y="39.8" width="23.2" height="14.8" fill="#efefef" fill-opacity="0.8" stroke="#b4b4b4"/>
<path d="M312.2,46.2 q3.4,-1 6.2,0.8 l2.600,0.600 q3.600,-3.800 6.400,-2.400 q3,1.400 7,1.600 V53 H312.200 Z" fill="#9c9c9c" stroke="none"/>
<path d="M312.200,50 H334.400" stroke="#c2c2c2" stroke-width="0.700"/>
<path d="M320.200,39.800 V54.600" stroke="#e4e4e4" stroke-width="0.900"/>
</g>

<!-- 10 bbox wire -->
<g fill="none" stroke-width="1">
<path d="M362,54.3 V33.6 H381.7 M362,54.3 L355.4,60.5 M362,54.3 H381.7" stroke="#8c8c8c" stroke-width="0.8"/>
<path d="M355.4,39.4 H376.1 V60.5 H355.4 Z M355.4,39.4 L362,33.6 M376.1,39.4 L381.7,33.6 V54.3 L376.1,60.5" stroke="#2e2e2e"/>
</g>

<!-- 11 points -->
<g fill="#111">
<circle cx="397.1" cy="34.7" r="1.3"/><circle cx="408.2" cy="33.9" r="1.3"/><circle cx="416.4" cy="36.1" r="1.3"/><circle cx="394.4" cy="37.5" r="1.3"/><circle cx="402.7" cy="39.1" r="1.3"/><circle cx="413.7" cy="38.5" r="1.3"/>
<circle cx="397.1" cy="55.9" r="1.3"/><circle cx="408.2" cy="55" r="1.3"/><circle cx="416.4" cy="57" r="1.3"/><circle cx="394.4" cy="58.4" r="1.3"/><circle cx="402.7" cy="60.1" r="1.3"/><circle cx="413.7" cy="59.5" r="1.3"/>
</g>

<!-- 12 wireframe cylinder -->
<g fill="none" stroke="#1c1c1c" stroke-width="0.75">
<path d="M431.8,37.2 L436.4,34.6 L448.8,34.6 L453.4,37.2 L448.8,39.8 L436.4,39.8 Z"/>
<path d="M431.8,57 L436.4,54.4 L448.8,54.4 L453.4,57 L448.8,60 L436.4,60 Z"/>
<path d="M431.8,37.2 V57 M453.4,37.2 V57 M436.4,39.8 V60 M448.8,39.8 V60 M436.4,34.6 V54.4 M448.8,34.6 V54.4"/>
<path d="M431.8,37.2 L436.4,60 M436.4,39.8 L431.8,57 M436.4,39.8 L448.8,60 M448.8,39.8 L436.4,60 M448.8,39.8 L453.4,57 M453.4,37.2 L448.8,60 M436.4,34.6 L448.8,54.4 M448.8,34.6 L436.4,54.4 M436.4,34.6 L448.8,39.8 M448.8,34.6 L436.4,39.8 M436.4,54.4 L448.8,60 M448.8,54.4 L436.4,60"/>
</g>

<!-- 13 smooth cylinder -->
<g>
<path d="M468.4,38 V57 q0,3.2 10.8,3.2 q10.8,0 10.8,-3.2 V38 Z" fill="url(#gCyl)"/>
<ellipse cx="479.2" cy="38" rx="10.8" ry="3.2" fill="#c4dcf6"/>
<ellipse cx="479.2" cy="38" rx="10.8" ry="3.2" fill="url(#gCyl)" opacity="0.5"/>
</g>

<!-- 14 flat cylinder (checked) -->
<g>
<path d="M507.4,38.6 L511,36.4 H524.6 L528.6,38.4 V59 L524.6,61 H511 L507.4,58.6 Z" fill="#e8f2fc"/>
<path d="M507.4,38.6 L511,36.4 H524.6 L528.6,38.4 L524.6,40.4 H511 Z" fill="#d2e6fa"/>
<path d="M514.6,40.6 H525 V61 H514.6 Z" fill="#8dbcf0"/>
<path d="M525,40.6 L528.6,38.4 V59 L525,61 Z" fill="#6aa0e2"/>
<path d="M507.4,38.6 L511,40.6 H514.6 V61 H511 L507.4,58.6 Z" fill="#f2f7fd"/>
</g>
<!-- 15 layers wire (gray hatched) -->
<g fill="#bdbdbd" stroke="#6c6c6c" stroke-width="0.55">
<path d="M559,54.6 L570,51.6 L581.2,54.4 L570,57.8 Z"/>
<path d="M559,52.2 L570,49.2 L581.2,52 L570,55.4 Z"/>
<path d="M559,49.8 L570,46.8 L581.2,49.6 L570,53 Z"/>
<path d="M559,47.4 L570,44.4 L581.2,47.2 L570,50.6 Z"/>
<path d="M559,45 L570,42 L581.2,44.8 L570,48.2 Z"/>
<path d="M559,42.6 L570,39.6 L581.2,42.4 L570,45.8 Z"/>
<path d="M559,40.2 L570,37.2 L581.2,40 L570,43.4 Z"/>
<path d="M561,38.6 L570,35.8 L579.4,38.4 L570,41.4 Z"/>
</g>
<g stroke="#5e5e5e" stroke-width="0.5" opacity="0.75">
<path d="M562,39 V55.6 M564.6,38.2 V56.4 M567.2,37.4 V57.2 M570,36.6 V57.6 M572.8,37.4 V57.2 M575.4,38.2 V56.4 M578,39 V55.6"/>
</g>

<!-- 16 axis icon -->
<g>
<path d="M594.6,42.8 L619.4,51" stroke="#d8203a" stroke-width="1.2"/>
<path d="M619,42.8 L594.8,51.2" stroke="#2838c8" stroke-width="1.2"/>
<path d="M620,51.2 L616.2,51.6 L617.2,48.8 Z" fill="#d8203a"/>
<path d="M594,51.6 L597.8,51.8 L596.8,49.2 Z" fill="#2838c8"/>
<rect x="606" y="34.6" width="1.9" height="25.4" fill="#58c860"/>
<path d="M606.95,33.2 L605.4,36.4 H608.5 Z" fill="#30a040"/>
<circle cx="606.9" cy="46.9" r="1.8" fill="#384890"/>
<text x="608.6" y="40" font-family="Liberation Sans, sans-serif" font-weight="bold" font-size="6.2" fill="#222">Y</text>
<text x="597.4" y="56.8" font-family="Liberation Sans, sans-serif" font-weight="bold" font-size="6.2" fill="#222">Z</text>
<text x="612.2" y="56.8" font-family="Liberation Sans, sans-serif" font-weight="bold" font-size="6.2" fill="#222">X</text>
</g>

<!-- 17 globe trackball (disabled look) -->
<g fill="none" stroke="#b4b4b4" stroke-width="1.1">
<circle cx="658" cy="46.7" r="11.5"/>
<ellipse cx="658" cy="46.7" rx="4.8" ry="11.5"/>
<ellipse cx="658" cy="46.7" rx="11.5" ry="4.4"/>
</g>

<!-- 18 A circle -->
<circle cx="695" cy="46.7" r="14" fill="#fdfd00" stroke="#000" stroke-width="1.7"/>
<text x="695" y="55" text-anchor="middle" font-family="Liberation Serif, serif" font-size="23.5" fill="#000">A</text>

<!-- 19 axes on white -->
<rect x="717.2" y="31.7" width="30" height="30" fill="#ffffff"/>
<path d="M730.3,33.2 V47.9" stroke="#379a68" stroke-width="1.5"/>
<path d="M730.3,47.9 H745.9" stroke="#d2404e" stroke-width="1.7"/>
<path d="M730.3,47.9 L720.6,57.4" stroke="#2f90dc" stroke-width="1.9"/>

<!-- 20 tape measure -->
<g stroke-linejoin="round">
<path d="M757.6,46.6 q4.8,-5.2 10.8,-5 q4.2,-0.6 7.2,-4.8 l5.8,2.6 q-2.2,4.8 -7.4,6 q-3.6,0.6 -6.2,2.4 Z" fill="#f2f200" stroke="#101000" stroke-width="0.9"/>
<path d="M774.8,36.6 L776.2,34 L782.6,35.6 L781.4,39.2 Z" fill="#c8c8c8" stroke="#222" stroke-width="0.9"/>
<ellipse cx="763" cy="51.8" rx="7.6" ry="9" transform="rotate(-14 763 51.8)" fill="#eaea00" stroke="#101000" stroke-width="1"/>
<ellipse cx="767.4" cy="53" rx="4.8" ry="7.2" transform="rotate(-10 767.4 53)" fill="#a4a400" stroke="#101000" stroke-width="0.9"/>
<ellipse cx="767.8" cy="53.4" rx="2.4" ry="4.6" transform="rotate(-10 767.8 53.4)" fill="#c8c820"/>
<path d="M757.4,49 l2,0.6 M757,51.6 l2,0.4 M757.2,54.2 l2,0 M758,56.8 l1.9,-0.5 M759.6,59 l1.6,-1 M758.8,46.6 l1.8,1 M761.2,44.6 l1.3,1.5" stroke="#3a3a00" stroke-width="0.6" fill="none"/>
</g>

<!-- 21 raster alignment camera (gray) -->
<g>
<rect x="803.4" y="33" width="8.6" height="4" rx="1" fill="#c9c9c9" stroke="#b0b0b0" stroke-width="0.6"/>
<rect x="794.2" y="36" width="23.6" height="15" rx="2.6" fill="url(#gCam)" opacity="0.85"/>
<rect x="798.4" y="39.6" width="1" height="8.6" fill="#e6e6e6"/>
<circle cx="807.4" cy="44.4" r="4.6" fill="#c2c2c2" stroke="#e2e2e2" stroke-width="1.1"/>
<circle cx="807.4" cy="44.4" r="2" fill="#d8d8d8"/>
<text x="806" y="55.6" text-anchor="middle" font-family="Liberation Sans, sans-serif" font-size="4.4" fill="#8c8c8c">Raster</text>
<text x="806" y="61.2" text-anchor="middle" font-family="Liberation Sans, sans-serif" font-size="4.4" fill="#8c8c8c">Alignment</text>
</g>

<!-- 22 brush -->
<g stroke-linejoin="round">
<ellipse cx="843" cy="57" rx="5" ry="0.9" fill="#c8c8c8" opacity="0.7"/>
<path d="M841.2,46.6 Q846,39.6 850.8,36 Q852,36.2 851.6,38 Q849.4,43.4 844,49 Z" fill="#b86a18" stroke="#7a4208" stroke-width="0.5"/>
<path d="M838,50.8 L841.2,46.6 L844,49 L840.2,52.8 Z" fill="#d8d8d8" stroke="#8a8a8a" stroke-width="0.5"/>
<path d="M832.8,57.6 Q835,53 838,50.8 L840.2,52.8 Q839.6,56.8 832.8,57.6 Z" fill="#141414"/>
</g>

<!-- 23 PP -->
<rect x="864.9" y="32.1" width="30.1" height="29.7" fill="#8a8a8a"/>
<g font-family="Liberation Serif, serif" font-weight="bold" font-style="italic" font-size="28" stroke-width="0.7" stroke-linejoin="round">
<text transform="translate(865.2,50.9) scale(1.2,1)" fill="#000" stroke="#000">P</text>
<text transform="translate(872.8,61.4) scale(1.2,1.06)" fill="#e8141c" stroke="#e8141c">P</text>
</g>
<!-- 24 pick points (arcs) -->
<g>
<g fill="none" stroke="#b0b0b0" stroke-width="0.9">
<circle cx="905.8" cy="35.8" r="3.6"/>
<path d="M902.2,46.2 A10.6,10.6 0 0 0 916.2,32"/>
<path d="M902.2,50 A14.4,14.4 0 0 0 920,32"/>
<path d="M902.4,53.8 A18.2,18.2 0 0 0 924,32"/>
</g>
<use href="#rdot" x="911.4" y="35.8"/><use href="#rdot" x="905.8" y="41.4"/>
<use href="#gdot" x="928.3" y="37.5"/><use href="#gdot" x="924.6" y="45.2"/><use href="#gdot" x="917" y="56.1"/>
<use href="#cur" x="922.6" y="46.6"/>
</g>

<!-- 25 pick on ellipse -->
<g>
<ellipse cx="953.8" cy="39.6" rx="14.4" ry="6.6" transform="rotate(-8 953.8 39.6)" fill="#d2d2e2" stroke="#8a8aa8" stroke-width="0.9"/>
<path d="M941.4,41.6 L966,36.2 M951,34.6 L957,44.6" stroke="#6a6a8a" stroke-width="0.7"/>
<use href="#rdot" x="947.6" y="34"/><use href="#rdot" x="941.3" y="40.2"/><use href="#rdot" x="966.3" y="36.2"/>
<use href="#gdot" x="962.3" y="44.6"/><use href="#gdot" x="953.9" y="57"/>
<use href="#cur" x="959.8" y="46.6"/>
</g>

<!-- 26 bunny -->
<g>
<rect x="977" y="58.2" width="28" height="3.2" fill="url(#gRain)" stroke="#3030a0" stroke-width="0.3"/>
<path d="M981.6,58.2 q-0.4,-3.6 1.2,-6.4 q-1.6,-1.2 -2.2,-3.4 q-3.4,0.4 -3.8,-2 q0.6,-3 4,-4.6 q0.6,-3.2 2.4,-6 q1.6,0 1.8,2.4 q0.6,1.4 0.6,3.2 l5,-5 q2,-0.6 2.4,1 l-5,6 q1.6,1 2,2.6 q5.4,-1.2 9.600,1.400 q3.800,2.600 3.400,7.200 q2.400,0.200 2.400,2 q-0.400,1.600 -2.400,1.600 Z" fill="url(#gBun)" stroke="#a03080" stroke-width="0.4" stroke-linejoin="round"/>
<path d="M985.200,40.800 l5.400,-5.400 q2,-0.600 2.400,1 l-5,6 Z" fill="#20d890"/>
<path d="M981.8,41.800 q0.600,-3.200 2.400,-6 q1.600,0 1.800,2.400 q0.400,2.600 -1.600,4.800 Z" fill="#28b838" stroke="#0a6a1a" stroke-width="0.4"/>
<path d="M993.6,57.800 q-1.600,-4.200 1.200,-7 q3.600,-1.600 6,1.200" fill="none" stroke="#b02090" stroke-width="0.7"/>
</g>

<!-- 27 georef -->
<g>
<path d="M1016.8,38.3 L1023.8,38.3 L1028.2,42.7 L1032.6,38.3 L1039.5,38.3 L1032.3,46.1 L1039.5,53.9 L1032.6,53.9 L1028.2,49.5 L1023.8,53.9 L1016.8,53.9 L1024.1,46.1 Z" fill="#f01010"/>
<path d="M1027.400,43.800 q-3.400,-4 -3.400,-6.400 a3.400,3.400 0 0 1 6.800,0 q0,2.400 -3.400,6.400 Z" fill="#3050e0"/>
<circle cx="1027.400" cy="37.200" r="1.100" fill="#e8ecff"/>
<text x="1028.200" y="61" text-anchor="middle" font-family="Liberation Sans, sans-serif" font-size="7.600" fill="#2c2c2c" textLength="27.400" lengthAdjust="spacingAndGlyphs">GEOREF</text>
</g>

<!-- 28 info -->
<circle cx="1065.600" cy="46.700" r="13.900" fill="#fdfd00" stroke="#000" stroke-width="1.800"/>
<text x="1065.200" y="56.600" text-anchor="middle" font-family="Liberation Serif, serif" font-weight="bold" font-style="italic" font-size="30" fill="#000" stroke="#000" stroke-width="0.9">i</text>

<!-- 29 select vertex -->
<g>
<rect x="1089.200" y="34.400" width="17.800" height="11" fill="none" stroke="#444" stroke-width="1" stroke-dasharray="1.300 1.300"/>
<use href="#rdot" x="1090.600" y="41.200"/>
<use href="#gdot" x="1113.300" y="37.500"/><use href="#gdot" x="1102" y="56.100"/>
<use href="#cur" x="1106.800" y="46"/>
</g>

<!-- 30 select face -->
<g stroke-linejoin="round">
<rect x="1126.300" y="34.400" width="17.200" height="11" fill="none" stroke="#444" stroke-width="1" stroke-dasharray="1.300 1.300"/>
<path d="M1136,35.800 L1128,49.600 L1139.600,49.600 L1134.800,56.400 L1129.800,50.200 Z" fill="#c4c4c4" stroke="#5a5a5a" stroke-width="0.700"/>
<path d="M1136,35.800 L1128,49.600 L1144,49.600 L1148.600,44.600 Z" fill="#f07070" stroke="#5a2020" stroke-width="0.800"/>
<path d="M1132,42.600 H1141.600 M1132,42.600 L1136.400,49.600 L1141.600,42.600 M1136,35.800 L1141.600,42.600 L1144,49.600" fill="none" stroke="#5a2020" stroke-width="0.700"/>
<path d="M1141,35.600 H1152.200 L1149.600,42.200 L1146.600,42.200 Z" fill="#f07070" stroke="#5a2020" stroke-width="0.800"/>
<path d="M1137.600,34.200 L1150.400,45.600" stroke="#f4f4f4" stroke-width="1.700"/>
<use href="#cur" x="1143.500" y="47"/>
</g>

<!-- 31 select connected -->
<g stroke-linejoin="round">
<rect x="1163.400" y="34.200" width="17.400" height="11.200" fill="none" stroke="#444" stroke-width="1" stroke-dasharray="1.300 1.300"/>
<path d="M1182,34 H1189.400 L1187,45.800 Z" fill="#b4b4b4" stroke="#4a4a4a" stroke-width="0.800"/>
<path d="M1175.300,34.800 L1164.800,48.400 L1172.800,56.400 L1181,42.800 Z" fill="#f07070" stroke="#5a2020" stroke-width="0.800"/>
<path d="M1169.800,41.600 H1180.200 M1164.800,48.400 H1177.600 M1169.800,41.600 L1172.600,48.400 L1180.200,42.800 M1175.300,34.800 L1172.600,48.400 L1172.800,56.400" fill="none" stroke="#5a2020" stroke-width="0.700"/>
<use href="#cur" x="1180.300" y="46.400"/>
</g>

<!-- 32 select polyline -->
<g>
<path d="M1202.100,33.800 L1222,37.200 L1227,47 L1218.300,46.200 L1207.700,56.600 L1200.200,45.200 L1209.800,43 Z" fill="none" stroke="#444" stroke-width="1" stroke-dasharray="1.300 1.300"/>
<use href="#cur" x="1217.700" y="45.600"/>
</g>

<!-- 33 delete vertices -->
<g>
<path d="M1259.700,43.300 L1282.300,39.600 L1270.900,57.900 Z" fill="none" stroke="#4a4a4a" stroke-width="0.800"/>
<circle cx="1259.700" cy="43.300" r="2.100" fill="#b85870" stroke="#3a2028" stroke-width="0.900"/>
<circle cx="1282.300" cy="39.600" r="2.100" fill="#b85870" stroke="#3a2028" stroke-width="0.900"/>
<circle cx="1270.900" cy="57.900" r="2.100" fill="#b85870" stroke="#3a2028" stroke-width="0.900"/>
<path d="M1260.300,35.200 L1281.500,57.900 M1281.500,35.200 L1260.300,57.900" stroke="#ee1010" stroke-width="2.200"/>
</g>

<!-- 34 delete faces -->
<g>
<path d="M1298.900,42.100 L1319.500,37.100 L1310.100,55.800 Z" fill="#f07878" stroke="#4a2020" stroke-width="0.900" stroke-linejoin="round"/>
<path d="M1299.100,35.200 L1317.800,56.600 M1317.800,35.200 L1299.100,56.600" stroke="#ee1010" stroke-width="2.200"/>
</g>

<!-- 35 delete faces+vertices -->
<g>
<path d="M1333.800,43.300 L1356.200,39.600 L1344.900,57.900 Z" fill="#f07878" stroke="#2a2020" stroke-width="0.900" stroke-linejoin="round"/>
<path d="M1334,35.200 L1355.800,57.900 M1355.800,35.200 L1334,57.900" stroke="#ee1010" stroke-width="2.200"/>
<circle cx="1333.800" cy="43.300" r="2.100" fill="#fff" stroke="#222" stroke-width="1"/>
<circle cx="1356.200" cy="39.600" r="2.100" fill="#fff" stroke="#222" stroke-width="1"/>
<circle cx="1344.900" cy="57.900" r="2.100" fill="#fff" stroke="#222" stroke-width="1"/>
</g>
</svg>

</body>
</html>
